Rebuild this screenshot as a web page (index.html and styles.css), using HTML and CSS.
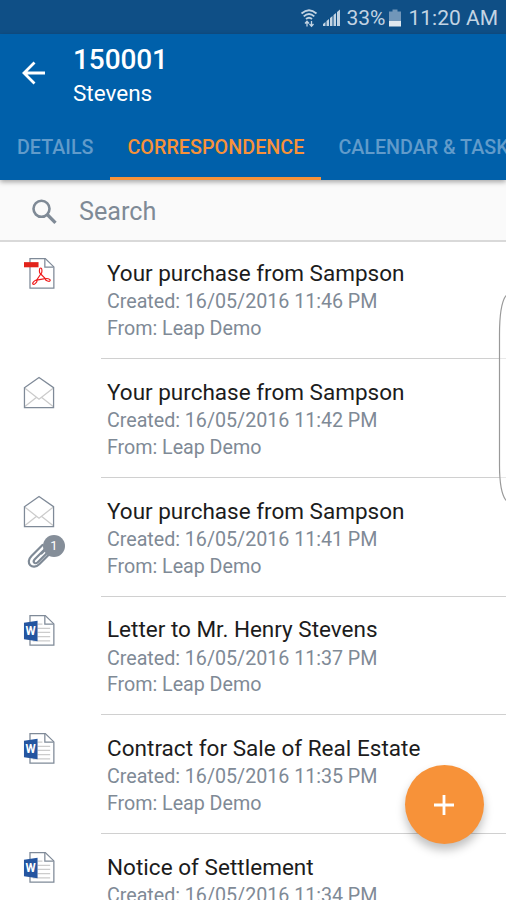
FILE: index.html
```html
<!DOCTYPE html>
<html lang="en">
<head>
<meta charset="utf-8">
<title>Correspondence</title>
<link rel="stylesheet" href="styles.css">
</head>
<body>
<svg width="0" height="0" class="defs">
  <defs>
    <symbol id="mail" viewBox="0 0 34 34">
      <path d="M2 12.5L16.5 24L31 12.5M2 31.5L14 22M31 31.5L19 22" fill="none" stroke="#cbcbcb" stroke-width="1.3"/>
      <path d="M1.5 12L16.5 1.5L31.5 12V32.5H1.5Z" fill="none" stroke="#7f8a98" stroke-width="1.3"/>
    </symbol>
    <symbol id="word" viewBox="0 0 34 34">
      <path d="M7.2 1.7H23L31.800 10.2V32H7.2Z" fill="#fff" stroke="#7f8a98" stroke-width="1.3"/>
      <path d="M22.5 1.7V10.5H31.5" fill="none" stroke="#7f8a98" stroke-width="1.3"/>
      <path d="M15 10.5H20M15 14.8H28M15 19H28M15 23.2H28M10 27.8H28" stroke="#ccc" stroke-width="1.3"/>
      <path d="M1 9L15 7V28L1 26Z" fill="#2455a0"/>
      <text x="2.6" y="21.8" class="word-letter" textLength="10.5" lengthAdjust="spacingAndGlyphs">W</text>
    </symbol>
    <symbol id="pdf" viewBox="0 0 34 34">
      <path d="M7.2 1.7H23L31.800 10.2V32H7.2Z" fill="#fff" stroke="#7f8a98" stroke-width="1.3"/>
      <path d="M22.5 1.7V10.5H31.5" fill="none" stroke="#7f8a98" stroke-width="1.3"/>
      <path d="M1 5.3H16V10.6H1Z" fill="#e2231a"/>
      <g fill="none" stroke="#ef1c1c" stroke-width="1.2">
        <path d="M18.3 17.500L14 23.800L23 22.300Z"/>
        <ellipse cx="18.200" cy="14.200" rx="1.300" ry="2.900"/>
        <ellipse cx="12.200" cy="26" rx="1.200" ry="2.800" transform="rotate(45 12.200 26)"/>
        <ellipse cx="25.600" cy="23.600" rx="2.500" ry="1.200" transform="rotate(18 25.600 23.600)"/>
      </g>
    </symbol>
  </defs>
</svg>
<div class="screen">
  <div class="status">
    <svg class="wifi" width="18" height="20" viewBox="0 0 18 20" fill="none" stroke="#c3d4e3" stroke-width="1.8">
      <path d="M1.5 5.5Q9 -1 16.5 5.5M3.7 8.3Q9 3.6 14.3 8.3M6 11Q9 8.4 12 11"/>
      <path d="M7 18.5V13.5M5 15.5L7 13.3L9 15.5M11.5 13V18M9.5 16L11.5 18.2L13.5 16" stroke-width="1.3"/>
    </svg>
    <svg class="signal" width="19" height="18" viewBox="0 0 19 18" fill="#c3d4e3">
      <path d="M1 17V15L3.5 13V17ZM4.5 17V12L7 10V17ZM8 17V9L10.5 7V17ZM11.5 17V6L14 4V17ZM15 17V3L18 0.5V17Z"/>
    </svg>
    <span class="pct">33%</span>
    <svg class="battery" width="12" height="18" viewBox="0 0 12 18">
      <path d="M3.5 0.5H8.500V2.5H12V12H0V2.5H3.5Z" fill="#7196b9"/>
      <path d="M0 12H12V17.5H0Z" fill="#e0e8ef"/>
    </svg>
    <span class="clock">11:20 AM</span>
  </div>
  <header class="appbar">
    <div class="toolbar">
      <svg class="back" width="24" height="24" viewBox="0 0 24 24" fill="none" stroke="#fff" stroke-width="2.8"><path d="M23 12H3M12.5 1.5L2 12L12.5 22.5"/></svg>
      <div class="heading">
        <div class="matter">150001</div>
        <div class="client">Stevens</div>
      </div>
    </div>
    <nav class="tabs">
      <span class="tab">DETAILS</span>
      <span class="tab active">CORRESPONDENCE</span>
      <span class="tab">CALENDAR &amp; TASKS</span>
    </nav>
  </header>
  <div class="search">
    <svg width="28" height="28" viewBox="0 0 28 28" fill="none" stroke="#7f8a96"><circle cx="10.500" cy="10.8" r="8" stroke-width="2.6"/><path d="M16.2 16.5L24.5 24.8" stroke-width="3.3"/></svg>
    <span>Search</span>
  </div>
  <main class="list">
    <article class="row">
      <div class="icons"><svg class="doc"><use href="#pdf"/></svg></div>
      <div class="text"><div class="title">Your purchase from Sampson</div><div class="meta">Created: 16/05/2016 11:46 PM</div><div class="meta">From: Leap Demo</div></div>
    </article>
    <article class="row">
      <div class="icons"><svg class="doc"><use href="#mail"/></svg></div>
      <div class="text"><div class="title">Your purchase from Sampson</div><div class="meta">Created: 16/05/2016 11:42 PM</div><div class="meta">From: Leap Demo</div></div>
    </article>
    <article class="row">
      <div class="icons"><svg class="doc"><use href="#mail"/></svg>
        <div class="attachment">
          <svg width="32" height="32" viewBox="0 0 32 32" fill="none" stroke="#7f8a96" stroke-width="2.5" stroke-linecap="round"><path d="M16.500 6L5.500 17C-1.500 24 6.500 32 13.500 25L25 13.500M18.500 10.500L9 20C6 23 9 26 12 23L21 14M20 10L15.500 14.500" stroke-width="2.200"/></svg>
          <span class="count">1</span>
        </div>
      </div>
      <div class="text"><div class="title">Your purchase from Sampson</div><div class="meta">Created: 16/05/2016 11:41 PM</div><div class="meta">From: Leap Demo</div></div>
    </article>
    <article class="row">
      <div class="icons"><svg class="doc"><use href="#word"/></svg></div>
      <div class="text"><div class="title">Letter to Mr. Henry Stevens</div><div class="meta">Created: 16/05/2016 11:37 PM</div><div class="meta">From: Leap Demo</div></div>
    </article>
    <article class="row">
      <div class="icons"><svg class="doc"><use href="#word"/></svg></div>
      <div class="text"><div class="title long">Contract for Sale of Real Estate</div><div class="meta">Created: 16/05/2016 11:35 PM</div><div class="meta">From: Leap Demo</div></div>
    </article>
    <article class="row">
      <div class="icons"><svg class="doc"><use href="#word"/></svg></div>
      <div class="text"><div class="title long">Notice of Settlement</div><div class="meta">Created: 16/05/2016 11:34 PM</div></div>
    </article>
  </main>
  <svg class="edge" width="8" height="208" viewBox="0 0 8 208"><path d="M8 0.5Q1.5 9 1.5 40V170Q1.5 197 8 205.500" fill="#fff" fill-opacity="0.5" stroke="#999" stroke-width="1.2"/></svg>
  <div class="fab"><svg width="20" height="20" viewBox="0 0 20 20" stroke="#fff" stroke-width="2.8"><path d="M10 0V20M0 10H20"/></svg></div>
</div>
</body>
</html>
```

FILE: styles.css
```css
* { box-sizing: border-box; }
body { margin: 0; font-family: Roboto, sans-serif; background: #fff; }
.defs { position: absolute; }
.screen { position: relative; width: 506px; height: 900px; overflow: hidden; background: #fff; }
.status { height: 34px; padding: 1px 8px 0 0; background: #0f4f86; color: #c3d4e3; display: flex; align-items: center; justify-content: flex-end; font-size: 21px; white-space: nowrap; }
.wifi { margin-right: 4px; }
.signal { margin-right: 5px; }
.battery { margin: 0 7px 0 4px; }
.appbar { position: relative; z-index: 1; height: 146px; background: #0060aa; box-shadow: 0 2px 5px rgba(0,0,0,.35); color: #fff; }
.toolbar { display: flex; height: 79px; padding-left: 22px; }
.back { margin-top: 27px; }
.heading { margin: 9px 0 0 27px; white-space: nowrap; }
.matter { font-size: 28px; font-weight: 500; line-height: 33px; letter-spacing: -0.1px; }
.client { font-size: 22.5px; line-height: 35px; }
.tabs { display: flex; height: 67px; white-space: nowrap; font-size: 19.7px; font-weight: 500; line-height: 70px; color: #619bca; }
.tab { height: 67px; padding: 0 17px; flex: none; }
.tab.active { color: #f79239; border-bottom: 3px solid #f79239; letter-spacing: 0.05px; }
.search { height: 62px; display: flex; align-items: center; padding: 3px 0 0 31px; background: #fafafa; border-bottom: 2px solid #d9d9d9; font-size: 25.2px; color: #7f8a96; }
.search svg { margin-right: 20px; }
.list { margin-top: -1.8px; }
.row { display: flex; height: 118.8px; }
.icons { width: 101px; padding: 17px 0 0 23px; flex: none; }
.doc { display: block; width: 33px; height: 33px; }
.text { flex: 1; padding: 18.8px 0 0 6px; border-bottom: 1.4px solid #d0d0d0; white-space: nowrap; }
.title { margin-bottom: 2.3px; font-size: 22.5px; line-height: 28px; color: #1c1c1c; }
.title.long { letter-spacing: 0.03px; }
.meta { font-size: 19.7px; line-height: 26.7px; letter-spacing: -0.03px; color: #7f8a96; }
.word-letter { font: 700 14px Roboto, sans-serif; fill: #fff; }
.attachment { position: relative; margin-top: 7px; width: 42px; height: 36px; }
.attachment svg { position: absolute; left: 3px; top: 4px; }
.count { position: absolute; left: 20px; top: 0; width: 22px; height: 22px; border-radius: 50%; background: #858e99; color: #fff; font-size: 13px; line-height: 22px; text-align: center; }
.edge { position: absolute; right: 0; top: 295px; }
.fab { position: absolute; left: 404.5px; top: 765px; width: 79px; height: 79px; border-radius: 50%; background: #f79239; box-shadow: 0 6px 10px rgba(0,0,0,.25); display: flex; align-items: center; justify-content: center; }
```
